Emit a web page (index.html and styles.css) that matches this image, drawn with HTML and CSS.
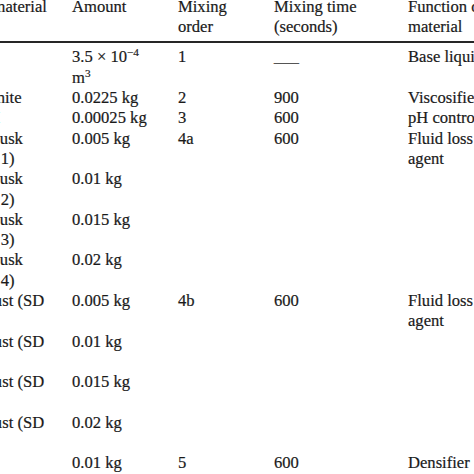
FILE: index.html
```html
<!DOCTYPE html>
<html lang="en">
<head>
<meta charset="utf-8">
<title>Mud formulation</title>
<link rel="stylesheet" href="styles.css">
</head>
<body>
<table class="mix-table">
  <colgroup>
    <col class="c-mat">
    <col class="c-amt">
    <col class="c-ord">
    <col class="c-time">
    <col class="c-fn">
  </colgroup>
  <thead>
    <tr>
      <th class="mat">Mud material</th>
      <th class="amt">Amount</th>
      <th class="ord">Mixing order</th>
      <th class="time">Mixing time (seconds)</th>
      <th class="fn">Function of material</th>
    </tr>
  </thead>
  <tbody>
    <tr class="first">
      <td class="mat">Water</td>
      <td class="amt">3.5 × 10<sup>−4</sup> m<sup>3</sup></td>
      <td class="ord">1</td>
      <td class="time"><span class="dash">___</span></td>
      <td class="fn">Base liquid</td>
    </tr>
    <tr>
      <td class="mat">Bentonite</td>
      <td class="amt">0.0225 kg</td>
      <td class="ord">2</td>
      <td class="time">900</td>
      <td class="fn">Viscosifier</td>
    </tr>
    <tr>
      <td class="mat">NaOH</td>
      <td class="amt">0.00025 kg</td>
      <td class="ord">3</td>
      <td class="time">600</td>
      <td class="fn">pH control</td>
    </tr>
    <tr>
      <td class="mat">Rice husk (RHA 1)</td>
      <td class="amt">0.005 kg</td>
      <td class="ord" rowspan="4">4a</td>
      <td class="time" rowspan="4">600</td>
      <td class="fn" rowspan="4">Fluid loss agent</td>
    </tr>
    <tr>
      <td class="mat">Rice husk (RHA 2)</td>
      <td class="amt">0.01 kg</td>
    </tr>
    <tr>
      <td class="mat">Rice husk (RHA 3)</td>
      <td class="amt">0.015 kg</td>
    </tr>
    <tr>
      <td class="mat">Rice husk (RHA 4)</td>
      <td class="amt">0.02 kg</td>
    </tr>
    <tr>
      <td class="mat">Sawdust (SD 1)</td>
      <td class="amt">0.005 kg</td>
      <td class="ord" rowspan="4">4b</td>
      <td class="time" rowspan="4">600</td>
      <td class="fn" rowspan="4">Fluid loss agent</td>
    </tr>
    <tr>
      <td class="mat">Sawdust (SD 2)</td>
      <td class="amt">0.01 kg</td>
    </tr>
    <tr>
      <td class="mat">Sawdust (SD 3)</td>
      <td class="amt">0.015 kg</td>
    </tr>
    <tr>
      <td class="mat">Sawdust (SD 4)</td>
      <td class="amt">0.02 kg</td>
    </tr>
    <tr>
      <td class="mat">Barite</td>
      <td class="amt">0.01 kg</td>
      <td class="ord">5</td>
      <td class="time">600</td>
      <td class="fn">Densifier</td>
    </tr>
  </tbody>
</table>
</body>
</html>
```

FILE: styles.css
```css
html, body {
  margin: 0;
  padding: 0;
  overflow: hidden;
  background: #ffffff;
}

.mix-table {
  font-family: "Liberation Serif", "Times New Roman", serif;
  font-size: 16.6px;
  line-height: 20.3px;
  color: #1a1a1a;
  -webkit-text-stroke: 0.2px #1a1a1a;
  border-collapse: collapse;
  table-layout: fixed;
  width: 551px;
  margin-left: -43px;
  margin-top: -3.5px;
}

.c-mat { width: 115px; }
.c-amt { width: 106px; }
.c-ord { width: 96px; }
.c-time { width: 134px; }
.c-fn { width: 100px; }

.mix-table th,
.mix-table td {
  padding: 0;
  text-align: left;
  vertical-align: top;
  font-weight: normal;
}

.mix-table th {
  padding-bottom: 3.7px;
  border-bottom: 2px solid #262626;
}

.mix-table .first td {
  padding-top: 4.7px;
}

.mix-table .mat { padding-right: 25px; }
.mix-table .amt { padding-right: 28px; }
.mix-table .ord { padding-right: 26px; }
.mix-table .time { padding-right: 34px; }
.mix-table .fn { padding-right: 15px; }

.mix-table sup {
  font-size: 0.68em;
  line-height: 0;
  vertical-align: 0.55em;
}

.dash {
  color: #555555;
  -webkit-text-stroke: 0.3px #555555;
}
```
